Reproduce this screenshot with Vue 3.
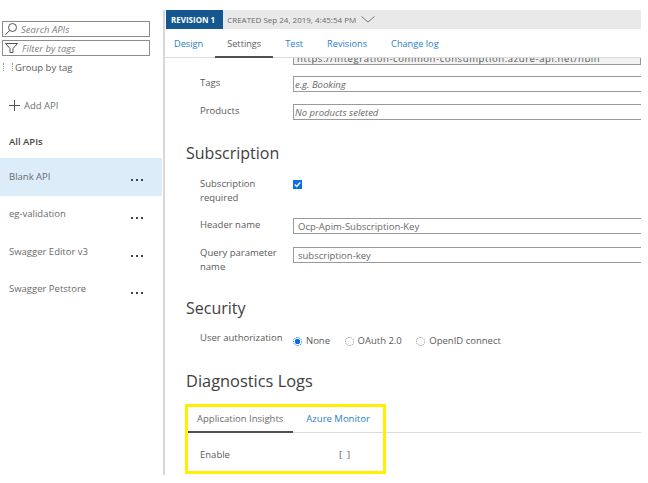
<template>
  <div class="page">
    <!-- API list -->
    <aside class="sidebar">
      <div class="search-box">
        <svg class="box-icon" width="12" height="12" viewBox="0 0 12 12">
          <circle cx="7.500" cy="4.500" r="4" fill="none" stroke="#555" />
          <path d="M4.700 7.300.5 11.800" fill="none" stroke="#555" />
        </svg>
        <span>Search APIs</span>
      </div>
      <div class="search-box filter">
        <svg class="box-icon" width="13" height="10" viewBox="0 0 13 10">
          <path d="M.5.5h12L8 5.500V9.500H5V5.500z" fill="none" stroke="#555" />
        </svg>
        <span>Filter by tags</span>
      </div>
      <div class="group-tag">
        <span class="ghost-check"></span>
        Group by tag
      </div>
      <div class="add-api">
        <svg width="11" height="11" viewBox="0 0 11 11">
          <path d="M5.500 0v11M0 5.500h11" stroke="#555" fill="none" />
        </svg>
        Add API
      </div>
      <div class="all-apis">All APIs</div>
      <div
        v-for="api in apis"
        :key="api"
        :class="['api-item', { active: api === selectedApi }]"
      >
        <span>{{ api }}</span>
        <span class="dots"><i></i><i></i><i></i></span>
      </div>
    </aside>

    <!-- settings pane -->
    <main class="pane">
      <div class="revision-bar">
        <span class="revision-tag">REVISION 1</span>
        <span class="created">CREATED Sep 24, 2019, 4:45:54 PM</span>
        <svg width="14" height="7" viewBox="0 0 14 7">
          <path d="M.5.5 7 6 13.500.5" fill="none" stroke="#777" />
        </svg>
      </div>
      <nav class="tabs">
        <span
          v-for="tab in tabs"
          :key="tab"
          :class="['tab', { current: tab === 'Settings' }]"
        >{{ tab }}</span>
      </nav>

      <div class="content">
        <div class="clipped-input">
          <span>https://integration-common-consumption.azure-api.net/hbin</span>
        </div>
        <div class="form-row tags-row">
          <label>Tags</label>
          <div class="field placeholder">e.g. Booking</div>
        </div>
        <div class="form-row products-row">
          <label>Products</label>
          <div class="field placeholder">No products seleted</div>
        </div>

        <h2 class="subscription-title">Subscription</h2>
        <div class="form-row required-row">
          <label>Subscription required</label>
          <svg class="checkbox" width="9" height="9" viewBox="0 0 9 9">
            <rect width="9" height="9" fill="#0a6ee8" />
            <path d="M1.800 4.600 3.700 6.500 7.200 2.500" fill="none" stroke="#fff" stroke-width="1.400" />
          </svg>
        </div>
        <div class="form-row header-row">
          <label>Header name</label>
          <div class="field">Ocp-Apim-Subscription-Key</div>
        </div>
        <div class="form-row query-row">
          <label>Query parameter name</label>
          <div class="field">subscription-key</div>
        </div>

        <h2 class="security-title">Security</h2>
        <div class="form-row auth-row">
          <label>User authorization</label>
          <div class="radios">
            <span v-for="opt in authOptions" :key="opt" class="radio">
              <i :class="['radio-dot', { on: opt === 'None' }]"></i>{{ opt }}
            </span>
          </div>
        </div>

        <h2 class="diag-title">Diagnostics Logs</h2>
        <div class="diag-wrap">
          <div class="diag-tabs">
            <span class="diag-tab current">Application Insights</span>
            <span class="diag-tab">Azure Monitor</span>
          </div>
          <div class="enable-row">
            <label>Enable</label>
            <span class="enable-toggle">[&nbsp;&nbsp;]</span>
          </div>
          <!-- yellow annotation drawn on top of the screenshot -->
          <div class="highlight"></div>
        </div>
      </div>
    </main>
  </div>
</template>

<script setup>
const apis = ["Blank API", "eg-validation", "Swagger Editor v3", "Swagger Petstore"];
const selectedApi = "Blank API";
const tabs = ["Design", "Settings", "Test", "Revisions", "Change log"];
const authOptions = ["None", "OAuth 2.0", "OpenID connect"];
</script>

<style>
body {
  margin: 0;
  background: #fff;
}
</style>

<style scoped>
.page {
  display: flex;
  align-items: flex-start;
  width: 648px;
  height: 483px;
  overflow: hidden;
  font-family: "Open Sans", "Liberation Sans", sans-serif;
  font-size: 9.5px;
  color: #5a5a5a;
  background: #fff;
}

/* 左侧列表 */
.sidebar {
  width: 165px;
  height: 465px;
  flex: none;
  margin-top: 10px;
  padding-top: 11px;
  box-sizing: border-box;
  border-right: 2px solid #d8d8d8;
}

.search-box {
  display: flex;
  align-items: center;
  gap: 4px;
  width: 148px;
  height: 16px;
  margin-left: 2px;
  box-sizing: border-box;
  border: 1px solid #8c8c8c;
  font-style: italic;
  color: #808080;
}

.box-icon {
  margin-left: 2px;
  flex: none;
}

.filter {
  margin-top: 3px;
}

.group-tag {
  display: flex;
  align-items: center;
  gap: 2px;
  height: 14px;
  margin: 4px 0 0 3px;
}

.ghost-check {
  flex: none;
  width: 10px;
  height: 8px;
  box-sizing: border-box;
  border-left: 1px dotted #999;
  border-right: 1px dotted #999;
}

.add-api {
  display: flex;
  align-items: center;
  gap: 4px;
  height: 14px;
  margin: 24px 0 0 9px;
  color: #707070;
}

.all-apis {
  height: 14px;
  line-height: 14px;
  margin: 23px 0 9px 9px;
  font-weight: 600;
  color: #484848;
}

.api-item {
  position: relative;
  width: 162px;
  height: 37.500px;
  padding-left: 9px;
  padding-top: 11px;
  box-sizing: border-box;
  line-height: 14px;
  color: #6a6a6a;
}

.api-item.active {
  height: 38px;
  padding-top: 12px;
  background: #dcecf9;
}

.dots {
  position: absolute;
  right: 19px;
  top: 21px;
  display: flex;
  gap: 3px;
}

.dots i {
  width: 2px;
  height: 2px;
  background: #444;
}

/* 右侧内容 */
.pane {
  width: 476px;
  flex: none;
  padding-top: 10px;
}

.revision-bar {
  display: flex;
  align-items: center;
  height: 19px;
  margin-left: 1px;
  background: #e9e9e9;
  font-size: 8px;
}

.revision-tag {
  align-self: stretch;
  display: flex;
  align-items: center;
  padding: 0 8px 0 5px;
  background: #14588f;
  color: #fff;
  font-weight: 700;
}

.created {
  margin: 0 5px 0 4px;
  color: #6a6a6a;
}

.tabs {
  display: flex;
  height: 29px;
  box-sizing: border-box;
  border-bottom: 1px solid #dcdcdc;
}

.tab {
  padding: 8px 12px 0;
  color: #2a80c9;
  font-size: 9.200px;
}

.tab:first-child {
  padding-left: 9px;
}

.tab.current {
  height: 29px;
  box-sizing: border-box;
  color: #606060;
  border-bottom: 2px solid #505050;
}

.content {
  padding-left: 20px;
}

.clipped-input {
  position: relative;
  height: 7px;
  margin-left: 108px;
  overflow: hidden;
  box-sizing: border-box;
  border: 1px solid #999;
  border-top: 0;
  background: #f1f1f1;
}

.clipped-input span {
  position: absolute;
  left: 3px;
  bottom: -1px;
  white-space: nowrap;
  letter-spacing: 0.600px;
  color: #555;
}

.form-row {
  display: flex;
  padding-left: 15px;
}

.form-row label {
  width: 93px;
  flex: none;
  line-height: 14px;
}

.field {
  flex: 1;
  height: 16px;
  box-sizing: border-box;
  border: 1px solid #9a9a9a;
  border-right: 0;
  padding-left: 4px;
  line-height: 15px;
  color: #6a6a6a;
}

.placeholder {
  padding-left: 1px;
  font-style: italic;
}

.tags-row {
  margin-top: 11px;
}

.products-row {
  margin-top: 12px;
}

h2 {
  margin: 0 0 0 1px;
  font-size: 16px;
  line-height: 22px;
  font-weight: 400;
  color: #404040;
}

.subscription-title {
  margin-top: 22px;
}

.required-row {
  margin-top: 13px;
}

.checkbox {
  margin-top: 3px;
}

.header-row {
  margin-top: 13px;
}

.query-row {
  margin-top: 12px;
}

.query-row .field {
  margin-top: 1px;
}

.security-title {
  margin-top: 23px;
}

.auth-row {
  margin-top: 12px;
}

.radios {
  display: flex;
  gap: 14.500px;
  padding-top: 3px;
  line-height: 14px;
}

.radio {
  display: flex;
  align-items: center;
  gap: 4px;
}

.radio-dot {
  width: 9px;
  height: 9px;
  box-sizing: border-box;
  border-radius: 50%;
  border: 1px dotted #888;
}

.radio-dot.on {
  border-color: #0a6ee8;
  background: radial-gradient(circle, #0a6ee8 0 2.500px, #fff 3px);
}

.diag-title {
  margin-top: 22px;
  font-size: 16.400px;
}

.diag-wrap {
  position: relative;
  margin-top: 15px;
}

.diag-tabs {
  display: flex;
  height: 26px;
  box-sizing: border-box;
  border-bottom: 1px solid #dcdcdc;
  margin-left: 3px;
}

.diag-tab {
  padding-top: 5px;
  margin-left: 13px;
  color: #2a80c9;
}

.diag-tab.current {
  height: 26px;
  box-sizing: border-box;
  margin-left: 0;
  padding: 5px 10px 0 9px;
  color: #6a6a6a;
  border-bottom: 2px solid #505050;
}

.enable-row {
  display: flex;
  padding: 15px 0 0 15px;
  line-height: 14px;
}

.enable-row label {
  width: 139px;
  flex: none;
}

.highlight {
  position: absolute;
  left: 0;
  top: -3px;
  width: 201px;
  height: 70px;
  box-sizing: border-box;
  border: 3px solid #fff000;
  pointer-events: none;
}
</style>
